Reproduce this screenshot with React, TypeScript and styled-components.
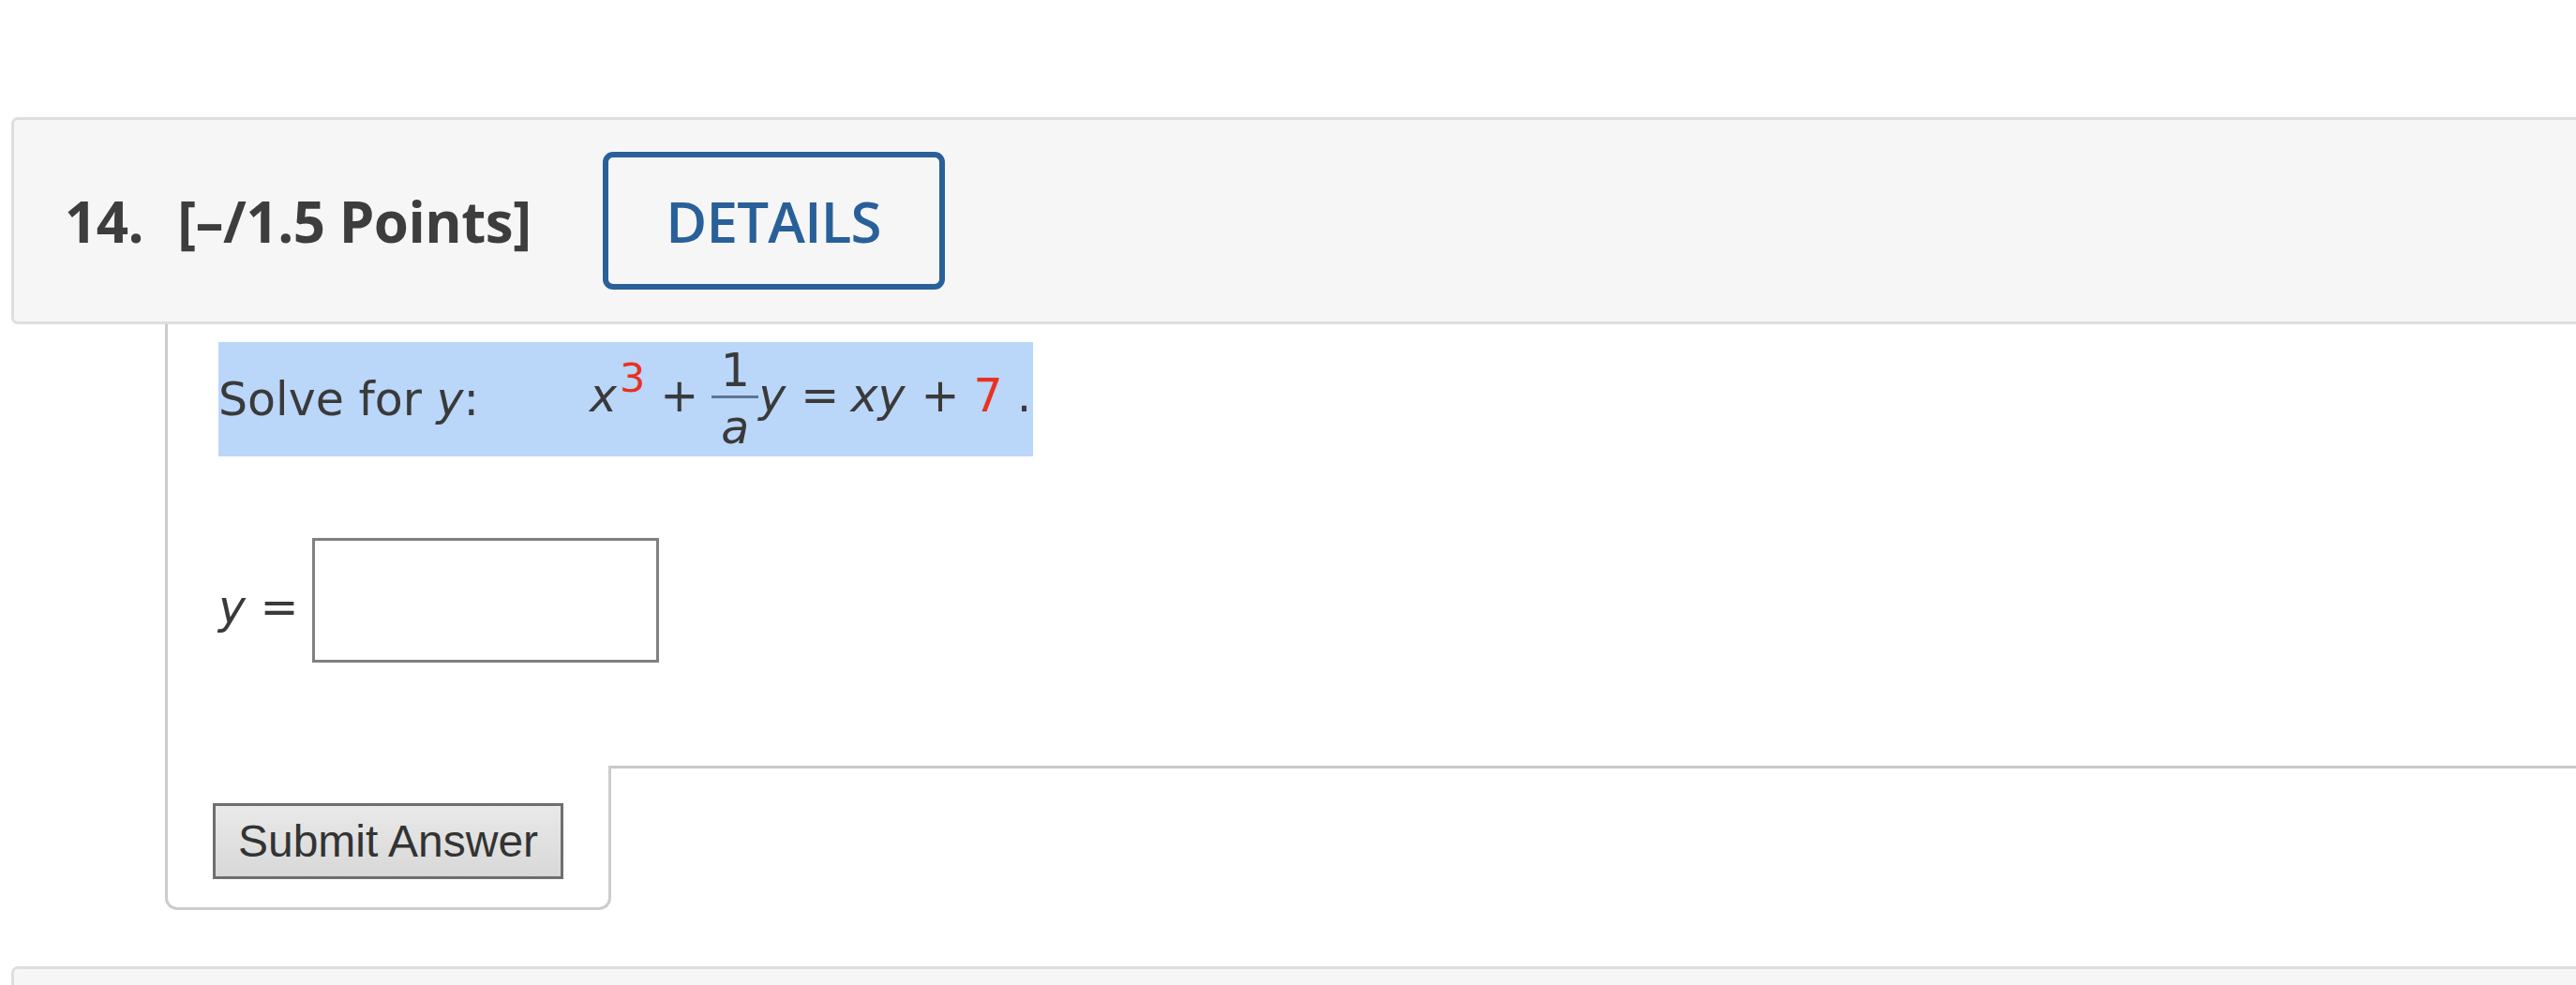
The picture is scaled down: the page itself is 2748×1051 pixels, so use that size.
import React from "react";
import styled, { createGlobalStyle } from "styled-components";

const GlobalStyle = createGlobalStyle`
  html, body {
    margin: 0;
    padding: 0;
    background: #ffffff;
    overflow: hidden;
  }
`;

const Page = styled.div`
  width: 100vw;
  height: 1051px;
  overflow: hidden;
  padding: 125px 0 0 12px;
  box-sizing: border-box;
`;

const QuestionHeader = styled.div`
  display: flex;
  align-items: center;
  box-sizing: border-box;
  width: calc(100% + 40px);
  height: 221px;
  padding-left: 54px;
  background: #f6f6f6;
  border: 3px solid #dedede;
  border-radius: 7px;
  font-family: "Open Sans", "Liberation Sans", sans-serif;
  font-weight: 700;
  font-size: 60px;
  letter-spacing: -0.5px;
  color: #3d3d3d;
`;

const QuestionNumber = styled.span`
  margin-right: 36px;
`;

const PointsLabel = styled.span`
  white-space: nowrap;
`;

const DetailsButton = styled.button`
  box-sizing: border-box;
  width: 365px;
  height: 147px;
  margin-left: 76px;
  padding: 0;
  background: transparent;
  border: 6px solid #29609a;
  border-radius: 11px;
  color: #29609a;
  font-family: "Open Sans", "Liberation Sans", sans-serif;
  font-weight: 600;
  font-size: 60px;
  letter-spacing: -0.8px;
  cursor: pointer;
`;

const QuestionBody = styled.div`
  margin-left: 164px;
  padding: 19px 0 110px 54px;
  border-left: 3px solid #cccccc;
  color: #3a3a3a;
  font-family: "DejaVu Sans", "Verdana", sans-serif;
  font-size: 49px;
`;

const Prompt = styled.div`
  display: inline-flex;
  align-items: center;
  height: 122px;
  padding-right: 2px;
  background: #bad6f9;
  white-space: nowrap;
`;

const PromptText = styled.span`
  margin-right: 118px;
`;

const MathLine = styled.span`
  line-height: 1;
`;

const Var = styled.i<{ $gap?: number }>`
  font-style: italic;
  margin-left: ${(p) => p.$gap ?? 0}px;
`;

const Sup = styled.sup`
  font-size: 43px;
  line-height: 0;
  vertical-align: 21px;
  margin-left: 3px;
  color: #e8321f;
`;

const Op = styled.span<{ $gap: number }>`
  margin-left: ${(p) => p.$gap}px;
`;

const Const = styled.span<{ $gap: number }>`
  margin-left: ${(p) => p.$gap}px;
  color: #e8321f;
`;

const Fraction = styled.span`
  display: inline-flex;
  flex-direction: column;
  align-items: center;
  width: 50px;
  margin-left: 14px;
  vertical-align: 27px;
`;

const Numerator = styled.span`
  display: block;
  font-size: 49px;
  line-height: 48px;
  margin-bottom: 2px;
`;

const FractionBar = styled.span`
  display: block;
  align-self: stretch;
  height: 3px;
  background: #5b7699;
`;

const Denominator = styled.i`
  display: block;
  font-style: italic;
  line-height: 48px;
  padding-top: 8px;
`;

const AnswerRow = styled.div`
  display: flex;
  align-items: center;
  margin-top: 87px;
`;

const AnswerLabel = styled.span`
  margin-top: 15px;
  white-space: nowrap;
`;

const AnswerInput = styled.input`
  box-sizing: border-box;
  width: 370px;
  height: 133px;
  margin-left: 14px;
  border: 3px solid #808080;
  background: #ffffff;
  outline: none;
`;

const FooterRow = styled.div`
  display: flex;
  align-items: flex-start;
  width: calc(100% + 40px);
`;

const SubmitTab = styled.div`
  box-sizing: border-box;
  width: 476px;
  height: 154px;
  margin-left: 164px;
  padding: 40px 0 0 48px;
  border: 3px solid #cccccc;
  border-top: none;
  border-radius: 0 0 13px 13px;
`;

const SubmitButton = styled.button`
  box-sizing: border-box;
  width: 374px;
  height: 81px;
  padding: 0;
  border: 3px solid #6e6e6e;
  border-radius: 0;
  background: linear-gradient(#e9e9e9, #d8d8d8);
  color: #333333;
  font-family: "Liberation Sans", Arial, sans-serif;
  font-size: 48px;
  cursor: pointer;
`;

const TabLine = styled.div`
  flex: 1;
  border-top: 3px solid #c8c8c8;
`;

const NextHeader = styled.div`
  box-sizing: border-box;
  width: calc(100% + 40px);
  height: 100px;
  margin-top: 60px;
  background: #f6f6f6;
  border: 3px solid #dedede;
  border-radius: 7px;
`;

export default function App() {
  return (
    <>
      <GlobalStyle />
      <Page>
        <QuestionHeader>
          <QuestionNumber>14.</QuestionNumber>
          <PointsLabel>[–/1.5 Points]</PointsLabel>
          <DetailsButton>DETAILS</DetailsButton>
        </QuestionHeader>

        <QuestionBody>
          <Prompt>
            <PromptText>
              Solve for <Var>y</Var>:
            </PromptText>
            <MathLine>
              <Var>x</Var>
              <Sup>3</Sup>
              <Op $gap={16}>+</Op>
              <Fraction>
                <Numerator>1</Numerator>
                <FractionBar />
                <Denominator>a</Denominator>
              </Fraction>
              <Var>y</Var>
              <Op $gap={16}>=</Op>
              <Var $gap={12}>x</Var>
              <Var>y</Var>
              <Op $gap={17}>+</Op>
              <Const $gap={15}>7</Const>
              <Op $gap={15}>.</Op>
            </MathLine>
          </Prompt>

          <AnswerRow>
            <AnswerLabel>
              <Var>y</Var> =
            </AnswerLabel>
            <AnswerInput type="text" aria-label="y" />
          </AnswerRow>
        </QuestionBody>

        <FooterRow>
          <SubmitTab>
            <SubmitButton>Submit Answer</SubmitButton>
          </SubmitTab>
          <TabLine />
        </FooterRow>

        <NextHeader />
      </Page>
    </>
  );
}
